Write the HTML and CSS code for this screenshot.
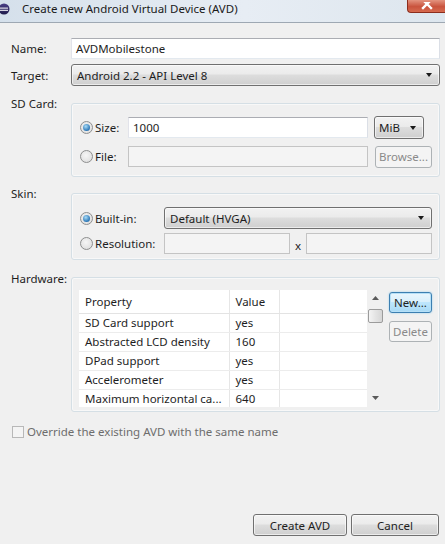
FILE: index.html
```html
<!DOCTYPE html>
<html lang="en">
<head>
  <meta charset="UTF-8">
  <meta name="viewport" content="width=device-width, initial-scale=1.0">
  <title>Create new Android Virtual Device (AVD)</title>
  <link rel="stylesheet" href="styles.css">
</head>
<body>
  <div class="window">
    <div class="titlebar">
      <svg class="app-icon" viewBox="0 0 11 12" width="11" height="12">
        <defs>
          <linearGradient id="eclipse" x1="0" y1="0" x2="0" y2="1">
            <stop offset="0" stop-color="#4a3f86"/>
            <stop offset="1" stop-color="#1e1a4a"/>
          </linearGradient>
        </defs>
        <circle cx="4" cy="6" r="5.5" fill="url(#eclipse)"/>
        <rect x="-1" y="4.6" width="9" height="1" fill="#fff"/>
        <rect x="-1" y="6.8" width="9" height="1" fill="#fff"/>
      </svg>
      <span class="title">Create new Android Virtual Device (AVD)</span>
      <div class="close">
        <svg viewBox="0 0 12 8" width="12" height="8">
          <path d="M2 -2 L10 6 M10 -2 L2 6" stroke="#fff" stroke-width="2.4" stroke-linecap="square"/>
        </svg>
      </div>
    </div>

    <div class="content">
      <div class="field-row name-row">
        <label>Name:</label>
        <div class="textbox">AVDMobilestone</div>
      </div>

      <div class="field-row target-row">
        <label>Target:</label>
        <div class="combo">Android 2.2 - API Level 8<span class="arrow"></span></div>
      </div>

      <div class="field-row group-row sd-row">
        <label>SD Card:</label>
        <div class="group sd-group">
          <div class="radio-label"><span class="radio checked"></span>Size:</div>
          <div class="textbox">1000</div>
          <div class="combo unit">MiB<span class="arrow"></span></div>

          <div class="radio-label"><span class="radio"></span>File:</div>
          <div class="textbox disabled"></div>
          <div class="button disabled browse">Browse...</div>
        </div>
      </div>

      <div class="field-row group-row skin-row">
        <label>Skin:</label>
        <div class="group skin-group">
          <div class="radio-label"><span class="radio checked"></span>Built-in:</div>
          <div class="combo skin">Default (HVGA)<span class="arrow"></span></div>

          <div class="radio-label"><span class="radio"></span>Resolution:</div>
          <div class="resolution">
            <div class="textbox disabled"></div>
            <span class="times">x</span>
            <div class="textbox disabled"></div>
          </div>
        </div>
      </div>

      <div class="field-row group-row hw-row">
        <label>Hardware:</label>
        <div class="group hw-group">
          <div class="table-wrap">
            <table class="props">
              <thead>
                <tr><th class="c-prop">Property</th><th class="c-val">Value</th><th class="c-rest"></th></tr>
              </thead>
              <tbody>
                <tr><td>SD Card support</td><td>yes</td><td></td></tr>
                <tr><td>Abstracted LCD density</td><td>160</td><td></td></tr>
                <tr><td>DPad support</td><td>yes</td><td></td></tr>
                <tr><td>Accelerometer</td><td>yes</td><td></td></tr>
                <tr><td>Maximum horizontal ca...</td><td>640</td><td></td></tr>
              </tbody>
            </table>
          </div>
          <div class="scrollbar">
            <svg class="scroll-arrow up" viewBox="0 0 7 4" width="7" height="4"><path d="M0 4 L3.5 0 L7 4 Z" fill="#5a5a5a"/></svg>
            <div class="thumb"></div>
            <svg class="scroll-arrow down" viewBox="0 0 7 4" width="7" height="4"><path d="M0 0 L3.5 4 L7 0 Z" fill="#5a5a5a"/></svg>
          </div>
          <div class="hw-buttons">
            <div class="button focused">New...</div>
            <div class="button disabled">Delete</div>
          </div>
        </div>
      </div>

      <div class="override">
        <span class="checkbox"></span>Override the existing AVD with the same name
      </div>

      <div class="actions">
        <div class="button create">Create AVD</div>
        <div class="button cancel">Cancel</div>
      </div>
    </div>
  </div>
</body>
</html>
```

FILE: styles.css
```css
* {
  box-sizing: border-box;
}

body {
  margin: 0;
  background-color: #f0f0f0;
  font-family: "Noto Sans", "Open Sans", sans-serif;
  font-size: 11.5px;
  color: #1e1e1e;
}

.window {
  width: 445px;
  height: 544px;
  display: flex;
  flex-direction: column;
  overflow: hidden;
}

/* title bar */
.titlebar {
  width: 445px;
  height: 23px;
  display: flex;
  align-items: flex-start;
  background: linear-gradient(to right, #d5e0eb, #e7edf4 55%, #dde6ee);
  border-bottom: 1px solid #9ea8b3;
}

.app-icon {
  margin-top: 3px;
  flex-shrink: 0;
}

.title {
  margin-left: 11px;
  line-height: 17px;
  color: #1a1a1a;
}

.close {
  flex-shrink: 0;
  margin-left: auto;
  width: 38px;
  height: 13px;
  background: linear-gradient(#e3937f, #c9533d 55%, #d66a4f);
  border-left: 1px solid #8c2d1d;
  border-bottom: 1px solid #8c2d1d;
  border-bottom-left-radius: 4px;
  display: flex;
  justify-content: center;
  align-items: flex-end;
  padding-bottom: 2px;
}

/* form layout */
.content {
  flex: 1;
  display: flex;
  flex-direction: column;
  padding: 0 5px 8px 11px;
}

.field-row {
  display: grid;
  grid-template-columns: 60px 369px;
  align-items: center;
}

.field-row label {
  line-height: 15px;
}

.name-row {
  margin-top: 15px;
  height: 21px;
}

.target-row {
  margin-top: 5px;
  height: 22px;
}

.group-row {
  align-items: start;
}

.sd-row {
  margin-top: 10px;
}

.skin-row {
  margin-top: 9px;
}

.hw-row {
  margin-top: 11px;
}

.group {
  margin-top: 7px;
  border: 1px solid #d5dfe5;
  border-radius: 3px;
  box-shadow: inset 0 0 0 1px #f8f8f8;
}

.hw-row .group {
  margin-top: 6px;
}

/* controls */
.textbox {
  height: 21px;
  line-height: 19px;
  padding-left: 4px;
  background: #fff;
  border: 1px solid;
  border-color: #abadb3 #dbdfe6 #e3e9ef #e2e3ea;
  white-space: nowrap;
}

.textbox.disabled {
  background: #f4f4f4;
  border-color: #c4c4c4;
}

.combo,
.button {
  height: 22px;
  border: 1px solid #707070;
  border-radius: 3px;
  background: linear-gradient(#f2f2f2, #ebebeb 45%, #dddddd 50%, #cfcfcf);
  box-shadow: inset 0 0 0 1px rgba(255, 255, 255, 0.6);
  white-space: nowrap;
}

.combo {
  display: flex;
  align-items: center;
  justify-content: space-between;
  padding: 0 7px 0 5px;
}

.arrow {
  width: 0;
  height: 0;
  border-left: 3.5px solid transparent;
  border-right: 3.5px solid transparent;
  border-top: 4px solid #1a1a1a;
}

.button {
  display: flex;
  align-items: center;
  justify-content: center;
}

.button.disabled {
  background: #f4f4f4;
  border-color: #adb2b5;
  color: #8a8a8a;
  box-shadow: none;
}

.button.focused {
  border-color: #3c7fb1;
  background: linear-gradient(#eaf6fd, #d9f0fc 45%, #bee6fd 50%, #a7d9f5);
  box-shadow: inset 0 0 0 1px #b6e0f7, 0 0 2px #8fcbeb;
}

.radio-label {
  display: flex;
  align-items: center;
  gap: 2px;
  white-space: nowrap;
}

.radio {
  flex-shrink: 0;
  width: 13px;
  height: 13px;
  border-radius: 50%;
  border: 1px solid #8e8f8f;
  background: radial-gradient(circle at 45% 40%, #f6f6f6, #d9d9d9);
  display: flex;
  align-items: center;
  justify-content: center;
}

.radio.checked::after {
  content: "";
  width: 7px;
  height: 7px;
  border-radius: 50%;
  background: radial-gradient(circle at 40% 35%, #a9dcf7, #2a75b5 70%, #1b4f80);
}

/* SD card group */
.sd-group {
  height: 74px;
  padding: 12px 0 0 8px;
  display: grid;
  grid-template-columns: 42px 240px auto;
  grid-template-rows: 23px 23px;
  column-gap: 6px;
  row-gap: 6px;
  align-items: center;
}

.combo.unit {
  width: 50px;
  height: 23px;
  padding-left: 4px;
}

.browse {
  width: 57px;
  margin-left: 1px;
}

/* skin group */
.skin-group {
  height: 67px;
  padding: 13px 0 0 8px;
  display: grid;
  grid-template-columns: 84px 268px;
  grid-template-rows: 22px 21px;
  row-gap: 4px;
  align-items: center;
}

.resolution {
  display: flex;
  align-items: center;
}

.resolution .textbox {
  width: 126px;
}

.times {
  width: 16px;
  text-align: center;
  padding-top: 3px;
}

/* hardware group */
.hw-group {
  height: 135px;
  padding: 12px 0 0 7px;
  display: flex;
  align-items: flex-start;
}

.table-wrap {
  width: 288px;
  height: 117px;
  background: #fff;
  overflow: hidden;
}

.props {
  width: 288px;
  border-collapse: collapse;
  table-layout: fixed;
}

.props th,
.props td {
  padding: 0 0 0 6px;
  text-align: left;
  font-weight: normal;
  white-space: nowrap;
  overflow: hidden;
  border-right: 1px solid #e6e6e6;
  border-bottom: 1px solid #ececec;
}

.props th {
  height: 23px;
  border-bottom-color: #e3e3e3;
}

.props td {
  height: 19px;
}

.c-prop {
  width: 150px;
}

.c-val {
  width: 50px;
}

.props th:last-child,
.props td:last-child {
  border-right: none;
}

.scrollbar {
  width: 16px;
  height: 117px;
  background: #f0f0f0;
  display: flex;
  flex-direction: column;
  align-items: center;
}

.scroll-arrow.up {
  margin-top: 6px;
}

.thumb {
  width: 15px;
  height: 14px;
  margin-top: 9px;
  border: 1px solid #9b9b9b;
  border-radius: 2px;
  background: linear-gradient(to right, #f4f4f4, #e4e4e4 50%, #d6d6d6);
}

.scroll-arrow.down {
  margin-top: auto;
  margin-bottom: 7px;
}

.hw-buttons {
  margin-left: 6px;
  display: flex;
  flex-direction: column;
  gap: 8px;
  padding-top: 2px;
}

.hw-buttons .button {
  width: 43px;
  height: 21px;
}

/* bottom */
.override {
  margin-top: 13px;
  display: flex;
  align-items: center;
  color: #6d6d6d;
  line-height: 13px;
  padding-left: 1px;
}

.checkbox {
  width: 12px;
  height: 12px;
  border: 1px solid #b8b8b8;
  background: #f4f4f4;
  margin-right: 3px;
}

.actions {
  margin-top: auto;
  display: flex;
  justify-content: flex-end;
  gap: 4px;
  padding-right: 1px;
}

.actions .button {
  height: 22px;
}

.create {
  width: 94px;
}

.cancel {
  width: 88px;
}
```
